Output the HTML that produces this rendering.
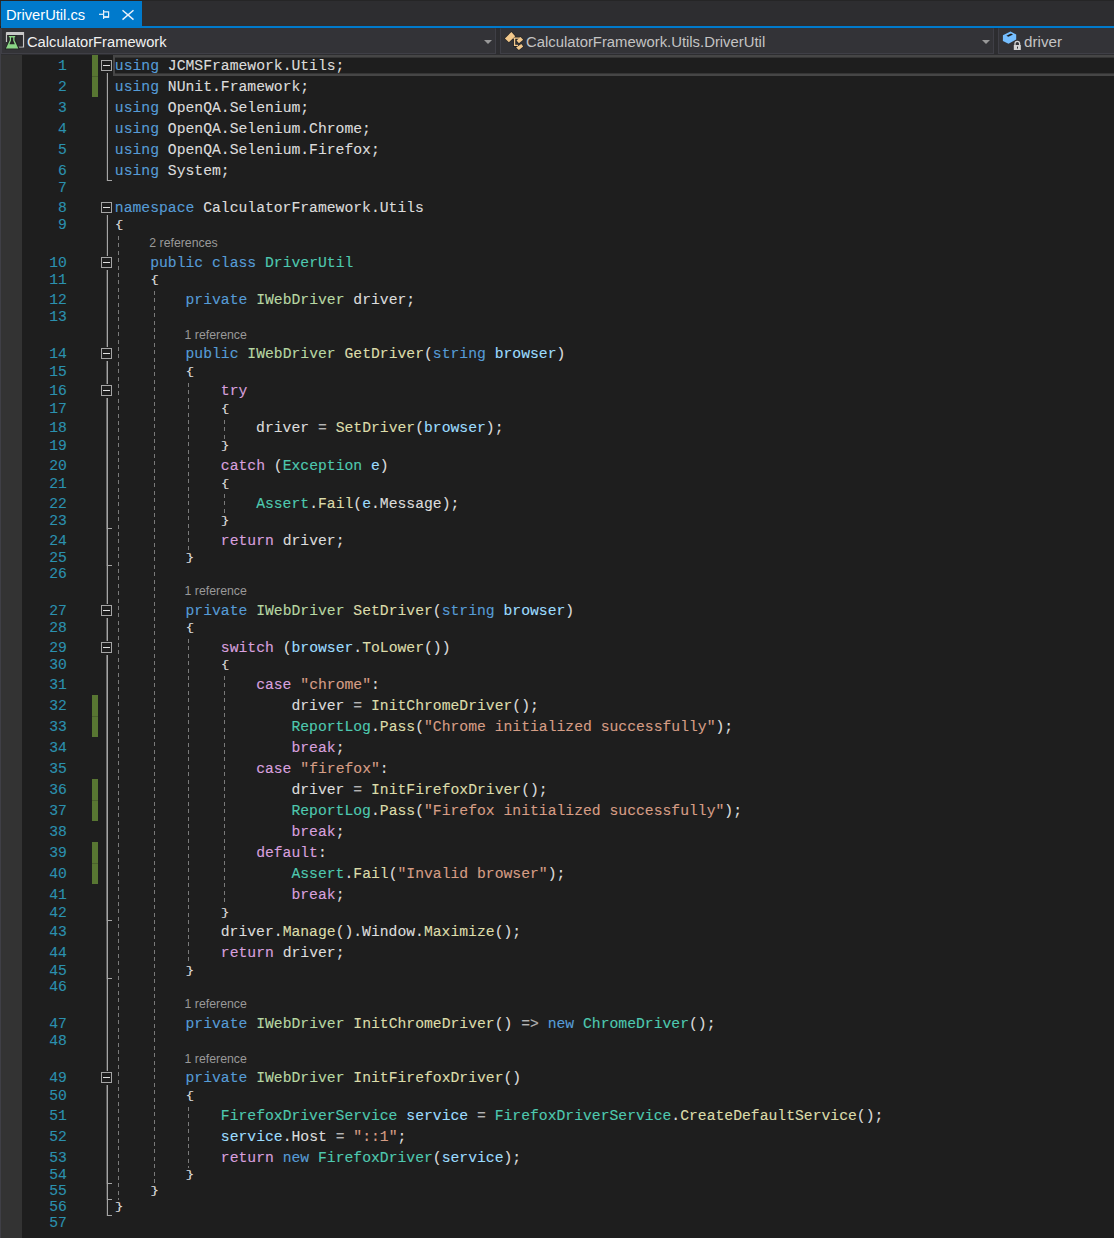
<!DOCTYPE html><html><head><meta charset="utf-8"><style>
*{margin:0;padding:0;box-sizing:border-box}
html,body{width:1114px;height:1238px;overflow:hidden;background:#1e1e1e}
.abs{position:absolute}
.code{-webkit-text-stroke:0.12px currentColor;position:absolute;left:114.8px;font-family:"Liberation Mono",monospace;font-size:14.72px;line-height:21px;height:21px;white-space:pre;color:#dcdcdc}
.ln{-webkit-text-stroke:0.12px currentColor;position:absolute;left:22px;width:44.8px;text-align:right;font-family:"Liberation Mono",monospace;font-size:14.72px;line-height:21px;height:21px;color:#2b91af;white-space:pre}
.lens{position:absolute;font-family:"Liberation Sans",sans-serif;font-size:12.3px;line-height:17px;color:#999999;white-space:pre}
i{font-style:normal}
.br{display:inline-block;transform:scaleY(0.73);transform-origin:50% 10px}
.kw{color:#569cd6}.ctrl{color:#d8a0df}.type{color:#4ec9b0}.iface{color:#b8d7a3}.meth{color:#dcdcaa}.param{color:#9cdcfe}.str{color:#d69d85}.op{color:#b4b4b4}
.ui{font-family:"Liberation Sans",sans-serif;white-space:pre;position:absolute}
.fold{position:absolute;left:101px;width:11px;height:11px;border:1px solid #a5a5a5;background:#1e1e1e;box-shadow:0 -1px 0 0 #1e1e1e,0 2px 0 0 #1e1e1e;z-index:2}
.fold:after{content:"";position:absolute;left:1px;top:4px;width:7px;height:1px;background:#e0e0e0}
.vl{position:absolute;left:107px;width:1px;background:#a5a5a5}
.tick{position:absolute;left:107px;width:5px;height:1px;background:#a5a5a5}
.guide{position:absolute;width:1px;background:repeating-linear-gradient(to bottom,#7a7a7a 0,#7a7a7a 4px,transparent 4px,transparent 7.4px)}
.green{position:absolute;left:92px;width:6px;background:#587632}
</style></head><body>

<div class="abs" style="left:0;top:0;width:1114px;height:26px;background:#2d2d30"></div>
<div class="abs" style="left:0;top:0;width:1114px;height:1px;background:#252526"></div>
<div class="abs" style="left:1px;top:1px;width:141px;height:25px;background:#007acc"></div>
<div class="abs" style="left:1px;top:26px;width:1113px;height:2px;background:#007acc"></div>
<div class="ui" style="left:6px;top:6px;font-size:14.7px;line-height:18px;color:#ffffff">DriverUtil.cs</div>
<svg class="abs" style="left:94px;top:4px" width="20" height="20" viewBox="0 0 20 20"><g fill="none" stroke="#e8f1fa" stroke-width="1.2"><path d="M5 10.3H9.4"/><path d="M9.6 6V15"/><path d="M9.6 7.8H14.6V13.2H9.6"/></g><path d="M9.6 12.2H14.9V13.6H9.6z" fill="#e8f1fa"/></svg>
<svg class="abs" style="left:118px;top:4px" width="20" height="20" viewBox="0 0 20 20"><path d="M4.5 6.3L15.5 15.6M15.5 6.3L4.5 15.6" stroke="#e8f1fa" stroke-width="1.5" fill="none"/></svg>
<div class="abs" style="left:0;top:28px;width:1114px;height:27px;background:#2d2d30"></div>
<div class="abs" style="left:1px;top:28px;width:495px;height:26px;background:#333337;border:1px solid #3f3f46;border-top-color:#333337"></div>
<div class="abs" style="left:500px;top:28px;width:494px;height:26px;background:#333337;border:1px solid #3f3f46;border-top-color:#333337"></div>
<div class="abs" style="left:998px;top:28px;width:117px;height:26px;background:#333337;border:1px solid #3f3f46;border-top-color:#333337"></div>
<div class="abs" style="left:484px;top:40px;width:0;height:0;border-left:4px solid transparent;border-right:4px solid transparent;border-top:4px solid #999999"></div>
<div class="abs" style="left:982px;top:40px;width:0;height:0;border-left:4px solid transparent;border-right:4px solid transparent;border-top:4px solid #999999"></div>
<div class="ui" style="left:27px;top:33px;font-size:14.7px;line-height:18px;color:#f1f1f1">CalculatorFramework</div>
<div class="ui" style="left:526px;top:33px;font-size:14.85px;line-height:18px;color:#c4c4c4">CalculatorFramework.Utils.DriverUtil</div>
<div class="ui" style="left:1024px;top:33px;font-size:15.2px;line-height:18px;color:#c4c4c4">driver</div>
<svg class="abs" style="left:2px;top:30px" width="26" height="22" viewBox="0 0 26 22">
<path d="M4 2h20v16h-9" fill="none" stroke="#252526" stroke-width="0"/>
<path d="M4.5 2.5H21.5V17H14.5" fill="none" stroke="#c8c8c8" stroke-width="1.2"/>
<path d="M4.5 2.5V12" fill="none" stroke="#c8c8c8" stroke-width="1.2"/>
<rect x="4.5" y="2" width="17" height="3" fill="#c8c8c8"/>
<rect x="5.6" y="5" width="15" height="11.4" fill="#2d2d30"/>
<path d="M6.5 5.5H14.5V6.8L13.5 7.2V10L17 18.8H3.6L7.5 10V7.2L6.5 6.8Z" fill="#252526" stroke="#252526" stroke-width="1.2"/>
<path d="M6.8 6H13.2V7.2H12.5V10.2L16.3 18.6H3.9L7.8 10.2V7.2H6.8Z" fill="#8ad586"/>
<path d="M9 7.4H11.2V10.6L12.8 14.2H7.4L9 10.6Z" fill="#252526"/>
</svg>
<svg class="abs" style="left:500px;top:30px" width="26" height="22" viewBox="0 0 26 22">
<g fill="#252526" stroke="#252526" stroke-width="1.2"><path d="M11.4 2L15.2 6.2L8.9 12.2L4.9 8.4Z"/><path d="M20.5 7.1L23.2 9.8L18.9 13.3L16.5 10.4Z"/><path d="M21.3 14L23.2 16.4L18.9 19.9L16.1 17.4Z"/></g>
<path d="M13.4 8.2H20.5M14.6 8.2V15.4H18" fill="none" stroke="#252526" stroke-width="3"/>
<g fill="#f2c88c"><path d="M11.4 2L15.2 6.2L8.9 12.2L4.9 8.4Z"/><path d="M20.5 7.1L23.2 9.8L18.9 13.3L16.5 10.4Z"/><path d="M21.3 14L23.2 16.4L18.9 19.9L16.1 17.4Z"/></g>
<path d="M13.4 8.2H20.5M14.6 8.2V15.4H18" fill="none" stroke="#f2c88c" stroke-width="1.3"/>
</svg>
<svg class="abs" style="left:994px;top:28px" width="30" height="26" viewBox="0 0 30 26">
<path d="M8.9 7.3L16.5 3.6L22.2 6.4V11.6L14.5 15.8L8.9 13Z" fill="#75beff"/>
<path d="M12.4 7.8L17 5.6L19 6.6L14.4 8.8Z" fill="#1e1e1e"/>
<rect x="19.8" y="17" width="7" height="5" fill="#d4d4d4"/>
<path d="M21 17.2V15.6A2.3 2.3 0 0 1 25.6 15.6V17.2" fill="none" stroke="#d4d4d4" stroke-width="1.3"/>
<rect x="23" y="18.6" width="1" height="2" fill="#333337"/>
</svg>
<div class="abs" style="left:0;top:55px;width:22px;height:1183px;background:#333333"></div>
<div class="abs" style="left:0;top:28px;width:1px;height:1210px;background:#3f3f46"></div>
<div class="abs" style="left:113px;top:55px;width:1010px;height:21px;border:2px solid #464646;box-shadow:inset 0 1px 0 #353535,inset 0 -1px 0 #353535"></div>
<div class="green" style="top:55px;height:42px"></div>
<div class="abs" style="left:92px;top:76px;width:6px;height:1px;background:#4a612c"></div>
<div class="green" style="top:695px;height:42px"></div>
<div class="abs" style="left:92px;top:716px;width:6px;height:1px;background:#4a612c"></div>
<div class="green" style="top:779px;height:42px"></div>
<div class="abs" style="left:92px;top:800px;width:6px;height:1px;background:#4a612c"></div>
<div class="green" style="top:842px;height:42px"></div>
<div class="abs" style="left:92px;top:863px;width:6px;height:1px;background:#4a612c"></div>
<div class="guide" style="left:118px;top:236px;height:964px"></div>
<div class="guide" style="left:154px;top:291px;height:893px"></div>
<div class="guide" style="left:188px;top:383px;height:167px"></div>
<div class="guide" style="left:224px;top:420px;height:19px"></div>
<div class="guide" style="left:224px;top:494px;height:19px"></div>
<div class="guide" style="left:188px;top:639px;height:324px"></div>
<div class="guide" style="left:224px;top:676px;height:229px"></div>
<div class="guide" style="left:188px;top:1107px;height:61px"></div>
<div class="fold" style="top:60px"></div>
<div class="vl" style="top:73px;height:108px"></div>
<div class="abs" style="left:106px;top:73px;width:1px;height:108px;background:rgba(255,255,255,0.1)"></div>
<div class="tick" style="top:180px"></div>
<div class="fold" style="top:202px"></div>
<div class="vl" style="top:215px;height:1001px"></div>
<div class="abs" style="left:106px;top:215px;width:1px;height:1001px;background:rgba(255,255,255,0.1)"></div>
<div class="tick" style="top:1215px"></div>
<div class="fold" style="top:257px"></div>
<div class="vl" style="top:270px;height:930px"></div>
<div class="abs" style="left:106px;top:270px;width:1px;height:930px;background:rgba(255,255,255,0.1)"></div>
<div class="tick" style="top:1199px"></div>
<div class="fold" style="top:348px"></div>
<div class="vl" style="top:361px;height:205px"></div>
<div class="abs" style="left:106px;top:361px;width:1px;height:205px;background:rgba(255,255,255,0.1)"></div>
<div class="tick" style="top:565px"></div>
<div class="fold" style="top:385px"></div>
<div class="vl" style="top:398px;height:131px"></div>
<div class="abs" style="left:106px;top:398px;width:1px;height:131px;background:rgba(255,255,255,0.1)"></div>
<div class="tick" style="top:528px"></div>
<div class="fold" style="top:605px"></div>
<div class="vl" style="top:618px;height:361px"></div>
<div class="abs" style="left:106px;top:618px;width:1px;height:361px;background:rgba(255,255,255,0.1)"></div>
<div class="tick" style="top:978px"></div>
<div class="fold" style="top:642px"></div>
<div class="vl" style="top:655px;height:266px"></div>
<div class="abs" style="left:106px;top:655px;width:1px;height:266px;background:rgba(255,255,255,0.1)"></div>
<div class="tick" style="top:920px"></div>
<div class="fold" style="top:1072px"></div>
<div class="vl" style="top:1085px;height:99px"></div>
<div class="abs" style="left:106px;top:1085px;width:1px;height:99px;background:rgba(255,255,255,0.1)"></div>
<div class="tick" style="top:1183px"></div>
<div class="ln" style="top:56px">1</div>
<div class="code" style="top:56px"><i class="kw">using</i> JCMSFramework.Utils;</div>
<div class="ln" style="top:77px">2</div>
<div class="code" style="top:77px"><i class="kw">using</i> NUnit.Framework;</div>
<div class="ln" style="top:98px">3</div>
<div class="code" style="top:98px"><i class="kw">using</i> OpenQA.Selenium;</div>
<div class="ln" style="top:119px">4</div>
<div class="code" style="top:119px"><i class="kw">using</i> OpenQA.Selenium.Chrome;</div>
<div class="ln" style="top:140px">5</div>
<div class="code" style="top:140px"><i class="kw">using</i> OpenQA.Selenium.Firefox;</div>
<div class="ln" style="top:161px">6</div>
<div class="code" style="top:161px"><i class="kw">using</i> System;</div>
<div class="ln" style="top:178px">7</div>
<div class="ln" style="top:198px">8</div>
<div class="code" style="top:198px"><i class="kw">namespace</i> CalculatorFramework.Utils</div>
<div class="ln" style="top:215px">9</div>
<div class="code" style="top:215px"><i class="br">{</i></div>
<div class="ln" style="top:253px">10</div>
<div class="code" style="top:253px">    <i class="kw">public</i> <i class="kw">class</i> <i class="type">DriverUtil</i></div>
<div class="ln" style="top:270px">11</div>
<div class="code" style="top:270px">    <i class="br">{</i></div>
<div class="ln" style="top:290px">12</div>
<div class="code" style="top:290px">        <i class="kw">private</i> <i class="iface">IWebDriver</i> driver;</div>
<div class="ln" style="top:307px">13</div>
<div class="ln" style="top:344px">14</div>
<div class="code" style="top:344px">        <i class="kw">public</i> <i class="iface">IWebDriver</i> <i class="meth">GetDriver</i>(<i class="kw">string</i> <i class="param">browser</i>)</div>
<div class="ln" style="top:362px">15</div>
<div class="code" style="top:362px">        <i class="br">{</i></div>
<div class="ln" style="top:381px">16</div>
<div class="code" style="top:381px">            <i class="ctrl">try</i></div>
<div class="ln" style="top:399px">17</div>
<div class="code" style="top:399px">            <i class="br">{</i></div>
<div class="ln" style="top:418px">18</div>
<div class="code" style="top:418px">                driver <i class="op">=</i> <i class="meth">SetDriver</i>(<i class="param">browser</i>);</div>
<div class="ln" style="top:436px">19</div>
<div class="code" style="top:436px">            <i class="br">}</i></div>
<div class="ln" style="top:456px">20</div>
<div class="code" style="top:456px">            <i class="ctrl">catch</i> (<i class="type">Exception</i> <i class="param">e</i>)</div>
<div class="ln" style="top:474px">21</div>
<div class="code" style="top:474px">            <i class="br">{</i></div>
<div class="ln" style="top:494px">22</div>
<div class="code" style="top:494px">                <i class="type">Assert</i>.<i class="meth">Fail</i>(<i class="param">e</i>.Message);</div>
<div class="ln" style="top:511px">23</div>
<div class="code" style="top:511px">            <i class="br">}</i></div>
<div class="ln" style="top:531px">24</div>
<div class="code" style="top:531px">            <i class="ctrl">return</i> driver;</div>
<div class="ln" style="top:548px">25</div>
<div class="code" style="top:548px">        <i class="br">}</i></div>
<div class="ln" style="top:564px">26</div>
<div class="ln" style="top:601px">27</div>
<div class="code" style="top:601px">        <i class="kw">private</i> <i class="iface">IWebDriver</i> <i class="meth">SetDriver</i>(<i class="kw">string</i> <i class="param">browser</i>)</div>
<div class="ln" style="top:618px">28</div>
<div class="code" style="top:618px">        <i class="br">{</i></div>
<div class="ln" style="top:638px">29</div>
<div class="code" style="top:638px">            <i class="ctrl">switch</i> (<i class="param">browser</i>.<i class="meth">ToLower</i>())</div>
<div class="ln" style="top:655px">30</div>
<div class="code" style="top:655px">            <i class="br">{</i></div>
<div class="ln" style="top:675px">31</div>
<div class="code" style="top:675px">                <i class="ctrl">case</i> <i class="str">&quot;chrome&quot;</i>:</div>
<div class="ln" style="top:696px">32</div>
<div class="code" style="top:696px">                    driver <i class="op">=</i> <i class="meth">InitChromeDriver</i>();</div>
<div class="ln" style="top:717px">33</div>
<div class="code" style="top:717px">                    <i class="type">ReportLog</i>.<i class="meth">Pass</i>(<i class="str">&quot;Chrome initialized successfully&quot;</i>);</div>
<div class="ln" style="top:738px">34</div>
<div class="code" style="top:738px">                    <i class="ctrl">break</i>;</div>
<div class="ln" style="top:759px">35</div>
<div class="code" style="top:759px">                <i class="ctrl">case</i> <i class="str">&quot;firefox&quot;</i>:</div>
<div class="ln" style="top:780px">36</div>
<div class="code" style="top:780px">                    driver <i class="op">=</i> <i class="meth">InitFirefoxDriver</i>();</div>
<div class="ln" style="top:801px">37</div>
<div class="code" style="top:801px">                    <i class="type">ReportLog</i>.<i class="meth">Pass</i>(<i class="str">&quot;Firefox initialized successfully&quot;</i>);</div>
<div class="ln" style="top:822px">38</div>
<div class="code" style="top:822px">                    <i class="ctrl">break</i>;</div>
<div class="ln" style="top:843px">39</div>
<div class="code" style="top:843px">                <i class="ctrl">default</i>:</div>
<div class="ln" style="top:864px">40</div>
<div class="code" style="top:864px">                    <i class="type">Assert</i>.<i class="meth">Fail</i>(<i class="str">&quot;Invalid browser&quot;</i>);</div>
<div class="ln" style="top:885px">41</div>
<div class="code" style="top:885px">                    <i class="ctrl">break</i>;</div>
<div class="ln" style="top:903px">42</div>
<div class="code" style="top:903px">            <i class="br">}</i></div>
<div class="ln" style="top:922px">43</div>
<div class="code" style="top:922px">            driver.<i class="meth">Manage</i>().Window.<i class="meth">Maximize</i>();</div>
<div class="ln" style="top:943px">44</div>
<div class="code" style="top:943px">            <i class="ctrl">return</i> driver;</div>
<div class="ln" style="top:961px">45</div>
<div class="code" style="top:961px">        <i class="br">}</i></div>
<div class="ln" style="top:977px">46</div>
<div class="ln" style="top:1014px">47</div>
<div class="code" style="top:1014px">        <i class="kw">private</i> <i class="iface">IWebDriver</i> <i class="meth">InitChromeDriver</i>() <i class="op">=&gt;</i> <i class="kw">new</i> <i class="type">ChromeDriver</i>();</div>
<div class="ln" style="top:1031px">48</div>
<div class="ln" style="top:1068px">49</div>
<div class="code" style="top:1068px">        <i class="kw">private</i> <i class="iface">IWebDriver</i> <i class="meth">InitFirefoxDriver</i>()</div>
<div class="ln" style="top:1086px">50</div>
<div class="code" style="top:1086px">        <i class="br">{</i></div>
<div class="ln" style="top:1106px">51</div>
<div class="code" style="top:1106px">            <i class="type">FirefoxDriverService</i> <i class="param">service</i> <i class="op">=</i> <i class="type">FirefoxDriverService</i>.<i class="meth">CreateDefaultService</i>();</div>
<div class="ln" style="top:1127px">52</div>
<div class="code" style="top:1127px">            <i class="param">service</i>.Host <i class="op">=</i> <i class="str">&quot;::1&quot;</i>;</div>
<div class="ln" style="top:1148px">53</div>
<div class="code" style="top:1148px">            <i class="ctrl">return</i> <i class="kw">new</i> <i class="type">FirefoxDriver</i>(<i class="param">service</i>);</div>
<div class="ln" style="top:1165px">54</div>
<div class="code" style="top:1165px">        <i class="br">}</i></div>
<div class="ln" style="top:1181px">55</div>
<div class="code" style="top:1181px">    <i class="br">}</i></div>
<div class="ln" style="top:1197px">56</div>
<div class="code" style="top:1197px"><i class="br">}</i></div>
<div class="ln" style="top:1213px">57</div>
<div class="lens" style="left:149.3px;top:235px">2 references</div>
<div class="lens" style="left:184.6px;top:327px">1 reference</div>
<div class="lens" style="left:184.6px;top:583px">1 reference</div>
<div class="lens" style="left:184.6px;top:996px">1 reference</div>
<div class="lens" style="left:184.6px;top:1051px">1 reference</div>
</body></html>
